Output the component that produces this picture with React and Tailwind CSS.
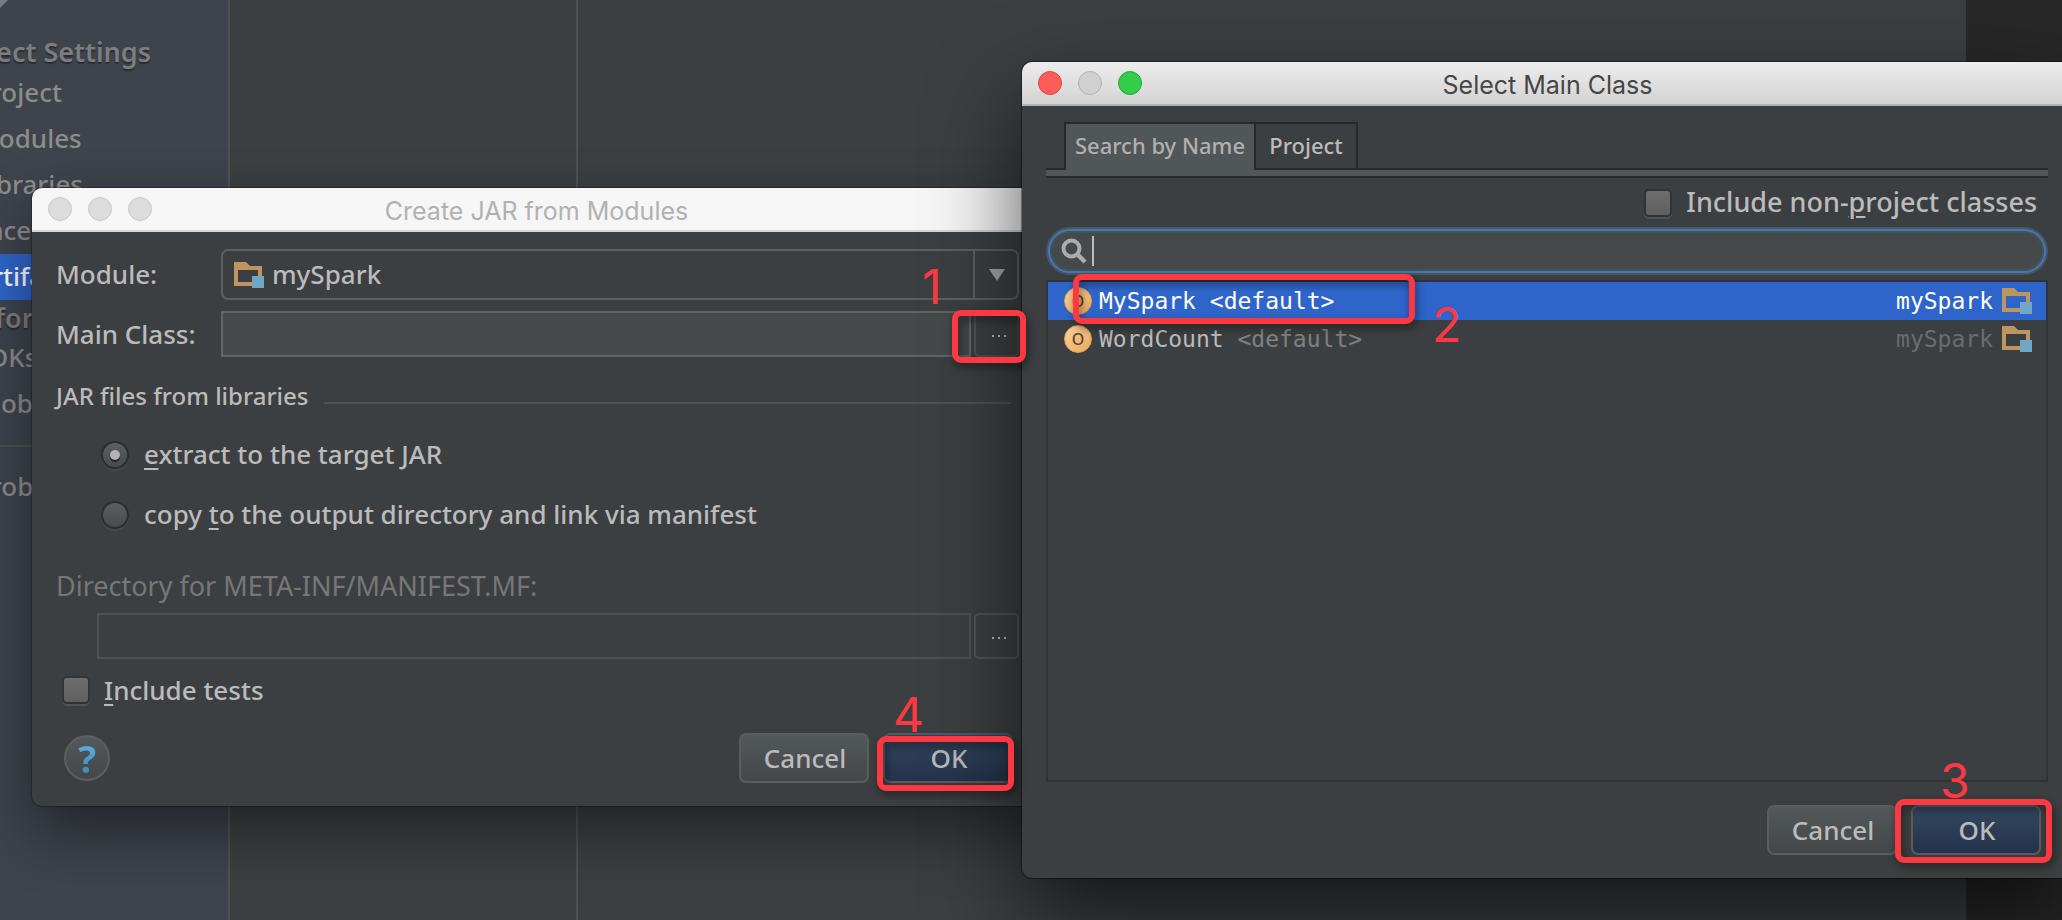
import React from "react";

function ModuleIcon() {
  return (
    <svg width="30" height="26" viewBox="0 0 30 26" aria-hidden="true">
      <path d="M0 0H12L16 4H28V14H24V8H4V20H18V24H0Z" fill="#bd9560" />
      <rect x="18" y="14" width="12" height="12" fill="#70a7c7" />
    </svg>
  );
}

function ObjectIcon() {
  return (
    <span className="flex h-7 w-7 shrink-0 items-center justify-center rounded-full border border-[#e0a055] bg-linear-to-br from-[#fbd09a] to-[#eda95a] font-['Noto_Sans',sans-serif] text-base text-[#5a4630]">
      O
    </span>
  );
}

function TrafficLights({ colors }) {
  const names = ["Close", "Minimize", "Zoom"];
  return (
    <div className="absolute left-4 flex gap-4">
      {names.map((name, i) => (
        <button key={name} aria-label={name} className={"h-6 w-6 rounded-full border " + colors[i]} />
      ))}
    </div>
  );
}

const sidebarProject = ["Project", "Modules", "Libraries", "Facets", "Artifacts"];
const sidebarPlatform = ["SDKs", "Global Libraries"];

function SidebarLink({ name }) {
  const active = name === "Artifacts";
  return (
    <a
      href={"#" + name}
      className={
        "flex h-[46px] items-center pb-[2px] pl-[15px] whitespace-nowrap " +
        (active ? "bg-[#2f65ca] text-white" : "text-[#8c8c8c]")
      }
    >
      {name}
    </a>
  );
}

function Sidebar() {
  return (
    <nav className="w-[230px] shrink-0 overflow-hidden border-r-2 border-[#515151] bg-[#3e434c]">
      <svg width="8" height="8" viewBox="0 0 8 8" className="block" aria-hidden="true">
        <path d="M0 0H8L0 8Z" fill="#77797b" />
      </svg>
      <div className="-ml-10 pt-[24px]">
        <h2 className="-ml-4 flex h-[38px] items-center pt-[2px] text-[27px] font-semibold whitespace-nowrap text-[#7d7d7d] text-shadow-[0_2px_1px_#2a2d33]">
          Project Settings
        </h2>
        {sidebarProject.map((n) => (
          <SidebarLink key={n} name={n} />
        ))}
        <h2 className="-ml-4 flex h-[35px] items-center text-[27px] font-semibold whitespace-nowrap text-[#7d7d7d] text-shadow-[0_2px_1px_#2a2d33]">
          Platform Settings
        </h2>
        {sidebarPlatform.map((n) => (
          <SidebarLink key={n} name={n} />
        ))}
        <div className="mt-[18px] mb-[17px] h-[2px] bg-[#4f5154]" />
        <SidebarLink name="Problems" />
      </div>
    </nav>
  );
}

function BackgroundWindow() {
  return (
    <div className="mr-24 flex min-h-screen bg-[#3c3f41]">
      <Sidebar />
      <div className="w-[348px] border-r-2 border-[#515151]" />
      <div className="flex-1" />
    </div>
  );
}

const checkboxClass =
  "h-7 w-7 shrink-0 appearance-none rounded-[5px] border-2 border-[#313335] bg-linear-to-b from-[#6e6e6e] to-[#5f5f5f] shadow-[0_2px_0_#505254]";
const radioClass =
  "flex h-7 w-7 shrink-0 appearance-none items-center justify-center rounded-full border-2 border-[#2c2e2f] bg-linear-to-b from-[#5a6062] to-[#474b4d] shadow-[0_2px_0_#474a4c] checked:before:h-[10px] checked:before:w-[10px] checked:before:rounded-full checked:before:bg-[#b4b4b4] checked:before:shadow-[0_2px_0_#222]";
const underline = "underline decoration-2 underline-offset-4";

function PushButton({ primary, children }) {
  return (
    <button
      className={
        "flex h-[50px] w-[130px] items-center justify-center rounded-[7px] border-2 border-[#5a5c5d] pb-px pl-[2px] bg-linear-to-b " +
        (primary ? "from-[#34465f] to-[#24334b]" : "from-[#53585a] to-[#434748]")
      }
    >
      {children}
    </button>
  );
}

function BrowseButton({ label }) {
  return (
    <button
      aria-label={label}
      className="flex h-[46px] w-[45px] items-center justify-center rounded-[5px] border-2 border-[#515355] pt-1 pl-1"
    >
      <svg width="14" height="2" viewBox="0 0 14 2" aria-hidden="true">
        <path d="M0 0h2v2H0zM6 0h2v2H6zM12 0h2v2h-2z" fill="#bbbbbb" />
      </svg>
    </button>
  );
}

function CreateJarDialog() {
  return (
    <section className="absolute top-[188px] left-8 w-[1009px] rounded-[10px] bg-[#3c3f41] shadow-[0_0_1px_1px_rgba(0,0,0,0.3),0_26px_60px_rgba(0,0,0,0.45)]">
      <header className="relative flex h-11 items-center justify-center rounded-t-[10px] border-b-2 border-[#d5d5d5] bg-[#f6f6f6]">
        <TrafficLights
          colors={["bg-[#dcdcdc] border-[#c8c8c8]", "bg-[#dcdcdc] border-[#c8c8c8]", "bg-[#dcdcdc] border-[#c8c8c8]"]}
        />
        <h1 className="pt-[3px] font-['Inter',sans-serif] text-[25px] font-normal text-[#b1b1b1]">
          Create JAR from Modules
        </h1>
      </header>
      <div className="pt-[17px] pr-[22px] pb-[23px] pl-6">
        <div className="flex items-center">
          <label htmlFor="module" className="w-[165px] shrink-0 pb-[2px]">
            Module:
          </label>
          <div className="relative flex-1">
            <select
              id="module"
              className="block h-[51px] w-full appearance-none rounded-[7px] border-2 border-[#5e6060] bg-transparent pb-px pl-[49px]"
            >
              <option>mySpark</option>
            </select>
            <div className="pointer-events-none absolute inset-y-0 left-[13px] flex items-center">
              <ModuleIcon />
            </div>
            <div className="pointer-events-none absolute inset-y-[2px] right-0 flex w-[46px] items-center justify-center border-l-2 border-[#5e6060]">
              <svg width="16" height="12" viewBox="0 0 16 12" aria-hidden="true">
                <path d="M0 0H16L8 12Z" fill="#a4a4a4" />
              </svg>
            </div>
          </div>
        </div>
        <div className="mt-[11px] flex items-center">
          <label htmlFor="main-class" className="w-[165px] shrink-0">
            Main Class:
          </label>
          <input id="main-class" className="h-[46px] min-w-0 flex-1 border-2 border-[#646464] bg-[#45494a] px-2" />
          <div className="ml-[3px]">
            <BrowseButton label="Browse main class" />
          </div>
        </div>

        <fieldset className="mt-[22px]">
          <legend className="flex h-9 w-full items-center gap-4 text-2xl">
            <span className="pb-[2px]">JAR files from libraries</span>
            <span className="mt-3 mr-2 h-[2px] flex-1 bg-[#515151]" />
          </legend>
          <label className="mt-[22px] ml-[45px] flex h-9 items-center gap-[15px]">
            <input type="radio" name="jar" defaultChecked className={radioClass} />
            <span className="pb-[2px]">
              <span className={underline}>e</span>xtract to the target JAR
            </span>
          </label>
          <label className="mt-6 ml-[45px] flex h-9 items-center gap-[15px]">
            <input type="radio" name="jar" className={radioClass} />
            <span className="pb-[2px]">
              copy <span className={underline}>t</span>o the output directory and link via manifest
            </span>
          </label>
        </fieldset>

        <label htmlFor="manifest" className="mt-9 flex h-9 items-center pb-[2px] text-[27px] font-normal text-[#777777]">
          Directory for META-INF/MANIFEST.MF:
        </label>
        <div className="mt-2 ml-[41px] flex">
          <input id="manifest" disabled className="h-[46px] min-w-0 flex-1 border-2 border-[#515151] px-2" />
          <div className="ml-[3px]">
            <BrowseButton label="Browse manifest directory" />
          </div>
        </div>
        <label className="mt-[13px] ml-[6px] flex h-9 items-center gap-[14px]">
          <input type="checkbox" className={checkboxClass} />
          <span>
            <span className={underline}>I</span>nclude tests
          </span>
        </label>
        <footer className="mt-[25px] flex items-center">
          <button
            aria-label="Help"
            className="ml-2 flex h-[46px] w-[46px] items-center justify-center rounded-full border-2 border-[#5c5f60] bg-linear-to-b from-[#53585a] to-[#434748]"
          >
            <span className="bg-linear-to-b from-[#60b4dc] to-[#3a86bd] bg-clip-text text-[38px] leading-none font-bold text-transparent">
              ?
            </span>
          </button>
          <div className="mr-[6px] ml-auto flex gap-[14px]">
            <PushButton>Cancel</PushButton>
            <PushButton primary>OK</PushButton>
          </div>
        </footer>
      </div>
    </section>
  );
}

function ResultRow({ name, selected }) {
  return (
    <li role="option" aria-selected={selected} className={selected ? "bg-[#2f65ca] text-white" : ""}>
      <button className="flex h-[38px] w-full items-center pr-[14px] pl-4 text-left font-['DejaVu_Sans_Mono',monospace] text-[23px]">
        <ObjectIcon />
        <span className="ml-[7px]">{name}&nbsp;</span>
        <span className={selected ? "" : "text-[#808080]"}>&lt;default&gt;</span>
        <span className={"mr-[9px] ml-auto " + (selected ? "" : "text-[#6c6c6c]")}>mySpark</span>
        <ModuleIcon />
      </button>
    </li>
  );
}

function SelectMainClassDialog() {
  return (
    <section className="absolute top-[62px] -right-[11px] left-[1022px] rounded-[10px] bg-[#3c3f41] shadow-[0_0_1px_1px_rgba(0,0,0,0.4),0_40px_90px_rgba(0,0,0,0.65)]">
      <header className="relative flex h-11 items-center justify-center rounded-t-[10px] border-b-2 border-[#b4b4b4] bg-linear-to-b from-[#ededed] to-[#d3d3d3]">
        <TrafficLights
          colors={["bg-[#fc5f59] border-[#e0443e]", "bg-[#d0d0d0] border-[#b2b2b2]", "bg-[#35cb4b] border-[#22ab35]"]}
        />
        <h1 className="pt-[3px] font-['Inter',sans-serif] text-[25px] font-normal text-[#464646]">
          Select Main Class
        </h1>
      </header>
      <div className="pt-4 pr-[25px] pb-[23px] pl-6">
        <div role="tablist" className="flex border-b-2 border-[#282828] pl-[18px] text-[22px] text-shadow-[0_2px_1px_#2a2c2d]">
          <button
            role="tab"
            aria-selected="true"
            className="-mb-[2px] h-12 w-[192px] border-2 border-b-0 border-[#282828] bg-[#515658] pb-1 text-[#b0b0b0]"
          >
            Search by Name
          </button>
          <button
            role="tab"
            aria-selected="false"
            className="h-[46px] w-[102px] border-t-2 border-r-2 border-[#282828] pb-[2px]"
          >
            Project
          </button>
        </div>
        <div className="h-2 border-b-2 border-[#282828] bg-[#515658]" />
        <label className="mt-[7px] mr-[11px] flex h-9 items-center justify-end gap-[14px] text-[27px]">
          <input type="checkbox" className={checkboxClass} />
          <span className="pb-[2px]">
            Include non-<span className={underline}>p</span>roject classes
          </span>
        </label>
        <div className="mx-[2px] mt-2 flex h-11 items-center rounded-full border-2 border-[#4a77a8] bg-[#45494a] pl-[11px] shadow-[0_0_0_2px_#45576a,inset_0_0_0_2px_#43525f]">
          <svg width="26" height="26" viewBox="0 0 26 26" fill="none" stroke="#acacac" aria-hidden="true">
            <circle cx="10.500" cy="10.500" r="8" strokeWidth="4" />
            <path d="M16 16L24 24" strokeWidth="4.500" />
          </svg>
          <span className="ml-[5px] h-[30px] w-[2px] bg-[#bbbbbb]" />
          <input aria-label="Search" className="h-full min-w-0 flex-1 bg-transparent px-1 outline-none" />
        </div>
        <ul role="listbox" className="mt-[7px] h-[502px] border-2 border-[#323232]">
          <ResultRow name="MySpark" selected />
          <ResultRow name="WordCount" />
        </ul>
        <footer className="mt-[23px] mr-[7px] flex justify-end gap-[14px]">
          <PushButton>Cancel</PushButton>
          <PushButton primary>OK</PushButton>
        </footer>
      </div>
    </section>
  );
}

function Marker({ digit, digitClass, boxClass }) {
  return (
    <div className="pointer-events-none font-['Inter',sans-serif] text-[48px] leading-none font-normal text-[#fc3842]">
      <div
        className={
          "absolute rounded-[9px] border-6 border-[#fc3842] drop-shadow-[2px_4px_4px_rgba(0,0,0,0.5)] " + boxClass
        }
      />
      <span className={"absolute " + digitClass}>{digit}</span>
    </div>
  );
}

export default function App() {
  return (
    <main className="relative min-h-screen overflow-hidden bg-[#282828] font-['Noto_Sans',sans-serif] text-[26px] leading-9 font-medium text-[#bbbbbb]">
      <BackgroundWindow />
      <CreateJarDialog />
      <SelectMainClassDialog />
      <Marker digit="1" digitClass="top-[263px] left-[922px]" boxClass="top-[310px] left-[952px] h-[53px] w-[74px]" />
      <Marker digit="2" digitClass="top-[301px] left-[1432px]" boxClass="top-[274px] left-[1073px] h-[50px] w-[342px]" />
      <Marker digit="3" digitClass="top-[757px] left-[1940px]" boxClass="top-[799px] left-[1895px] h-16 w-[157px]" />
      <Marker digit="4" digitClass="top-[691px] left-[893px]" boxClass="top-[736px] left-[877px] h-[55px] w-[137px]" />
    </main>
  );
}
